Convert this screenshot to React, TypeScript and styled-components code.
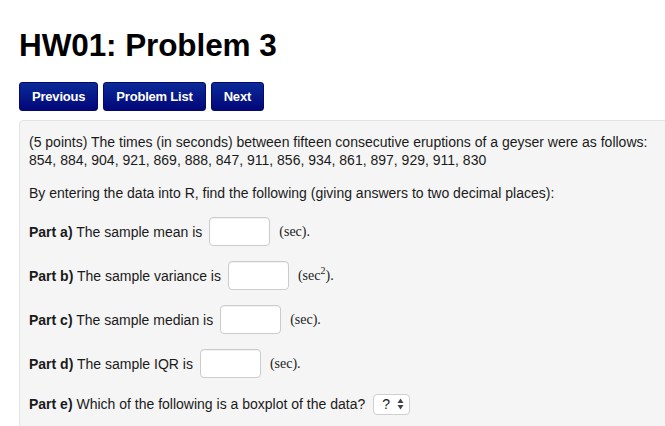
import React, { ReactElement, ReactNode } from 'react';
import styled, { createGlobalStyle } from 'styled-components';

const GlobalStyle = createGlobalStyle`
  html, body {
    margin: 0;
    padding: 0;
    background: #ffffff;
    overflow: hidden;
  }
  body {
    font-family: "Liberation Sans", Arial, Helvetica, sans-serif;
    color: #222222;
  }
`;

const Page = styled.div`
  padding: 0 0 0 19px;
  width: 665px;
  height: 426px;
  box-sizing: border-box;
  overflow: hidden;
`;

const Title = styled.h1`
  margin: 0;
  padding-top: 27px;
  font-size: 31.5px;
  line-height: 36px;
  font-weight: bold;
  color: #000000;
  letter-spacing: -0.1px;
`;

const NavBar = styled.div`
  display: flex;
  gap: 5px;
  margin-top: 19px;
`;

const NavButton = styled.button`
  height: 29px;
  padding: 0 12px;
  border: 1px solid #06086a;
  border-radius: 3px;
  background: linear-gradient(#0b2a98, #020779);
  color: #ffffff;
  font-family: "Liberation Sans", Arial, sans-serif;
  font-size: 13px;
  font-weight: bold;
  letter-spacing: -0.2px;
  cursor: pointer;
`;

const Panel = styled.div`
  margin-top: 9px;
  margin-right: -20px;
  padding: 12px 9px 0 9px;
  height: 320px;
  background: #f5f5f5;
  border: 1px solid #e3e3e3;
  border-radius: 4px;
  font-size: 14px;
  line-height: 18px;
  color: #1a1a1a;
`;

const Paragraph = styled.p`
  margin: 0 0 15px 0;
`;

const PartRow = styled.div<{ $last?: boolean }>`
  display: flex;
  align-items: center;
  height: ${(p) => (p.$last ? '22px' : '29px')};
  margin-bottom: 15px;
  white-space: pre;
`;

const AnswerBox = styled.input`
  width: 61px;
  height: 29px;
  box-sizing: border-box;
  margin: 0 9px 0 7px;
  border: 1px solid #cccccc;
  border-radius: 4px;
  background: #ffffff;
  box-shadow: inset 0 1px 1px rgba(0, 0, 0, 0.06);
`;

const Units = styled.span`
  font-family: "Liberation Serif", "Times New Roman", serif;
  font-size: 14px;
  color: #222222;
`;

const Sup = styled.sup`
  font-size: 10px;
  line-height: 0;
`;

const SelectBox = styled.div`
  display: flex;
  align-items: center;
  justify-content: space-between;
  width: 37px;
  height: 21px;
  box-sizing: border-box;
  margin-left: 8px;
  padding: 0 5px 0 8px;
  border: 1px solid #cfcfcf;
  border-radius: 4px;
  background: #ffffff;
  font-size: 14px;
`;

const Arrows = () => (
  <svg width="7" height="12" viewBox="0 0 7 12">
    <path d="M3.5 0.5 L6.5 5 L0.5 5 Z" fill="#444" />
    <path d="M3.5 11.5 L6.5 7 L0.5 7 Z" fill="#444" />
  </svg>
);

interface PartProps {
  part: string;
  text: string;
  units: ReactNode;
}

const Part = ({ part, text, units }: PartProps): ReactElement => (
  <PartRow>
    <b>{`Part ${part})`}</b>
    {` ${text}`}
    <AnswerBox type="text" />
    <Units>{units}</Units>
  </PartRow>
);

const App = (): ReactElement => (
  <Page>
    <GlobalStyle />
    <Title>HW01: Problem 3</Title>
    <NavBar>
      <NavButton>Previous</NavButton>
      <NavButton>Problem List</NavButton>
      <NavButton>Next</NavButton>
    </NavBar>
    <Panel>
      <Paragraph>
        (5 points) The times (in seconds) between fifteen consecutive eruptions of a geyser were as follows:
        <br />
        854, 884, 904, 921, 869, 888, 847, 911, 856, 934, 861, 897, 929, 911, 830
      </Paragraph>
      <Paragraph>
        By entering the data into R, find the following (giving answers to two decimal places):
      </Paragraph>
      <Part part="a" text="The sample mean is" units="(sec)." />
      <Part part="b" text="The sample variance is" units={<>(sec<Sup>2</Sup>).</>} />
      <Part part="c" text="The sample median is" units="(sec)." />
      <Part part="d" text="The sample IQR is" units="(sec)." />
      <PartRow $last>
        <b>Part e)</b>
        {' Which of the following is a boxplot of the data?'}
        <SelectBox>
          ?
          <Arrows />
        </SelectBox>
      </PartRow>
    </Panel>
  </Page>
);

export default App;
